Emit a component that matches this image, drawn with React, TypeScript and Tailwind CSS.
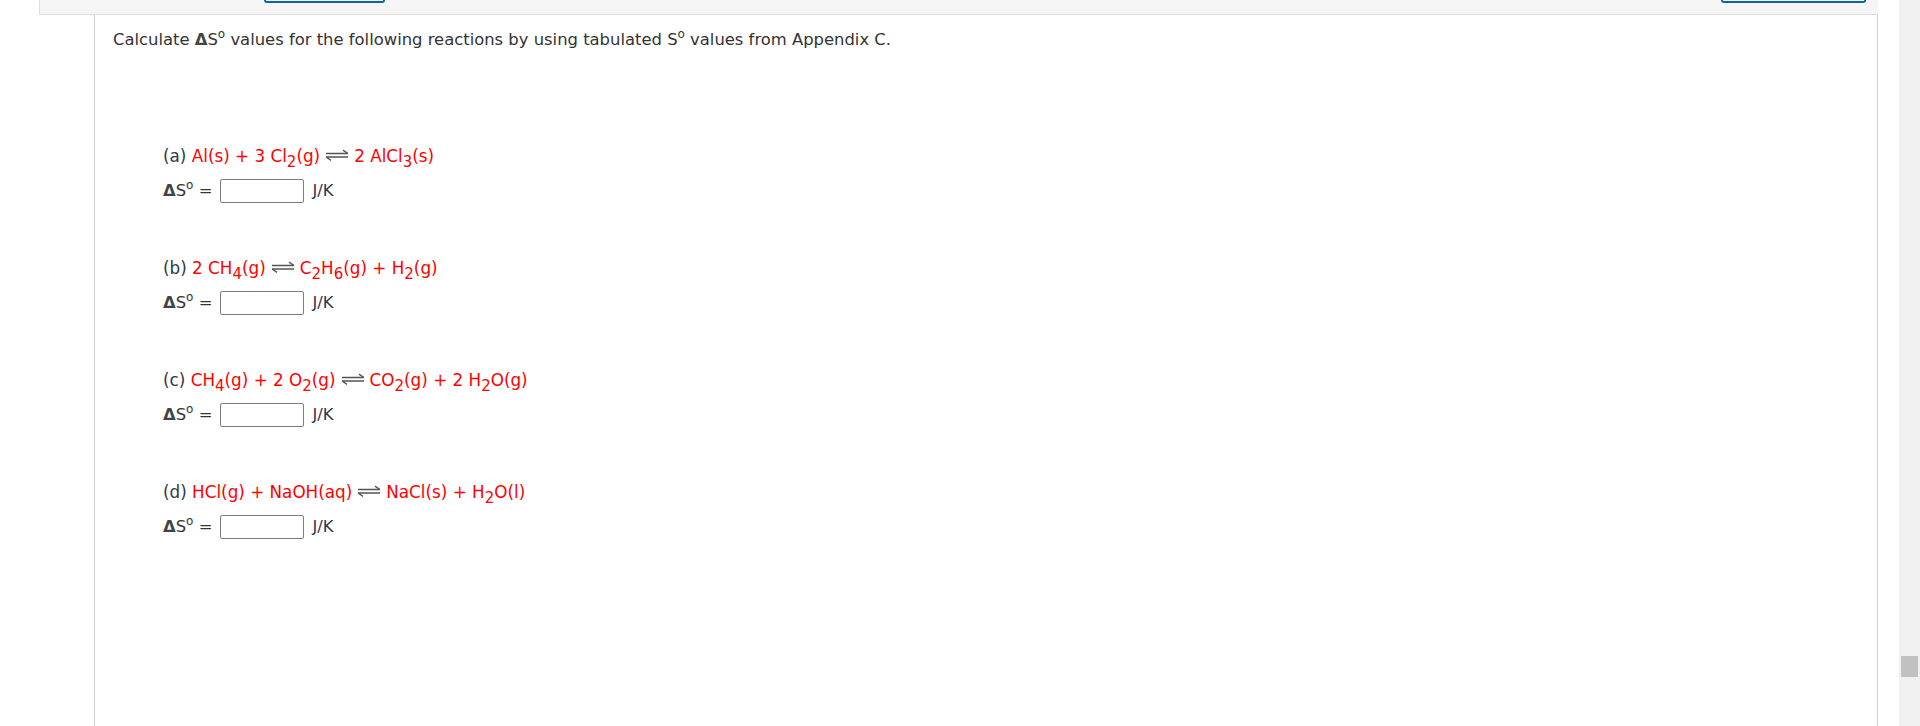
import React from 'react';

const Sub: React.FC<{ children: React.ReactNode }> = ({ children }) => (
  <sub className="text-[15px] -bottom-[0.3em]">{children}</sub>
);

const Deg: React.FC = () => (
  <sup className="text-[12px] -top-[0.6em]">o</sup>
);

const Arrow: React.FC = () => (
  <svg
    width="24"
    height="12"
    viewBox="0 0 24 12"
    className="mx-[5px] inline-block -translate-y-[2px]"
  >
    <path
      d="M1 4.5H23M23 4.5L18 1.2M1 8H23M1 8L6 11.3"
      stroke="#555"
      strokeWidth="1.4"
      fill="none"
    />
  </svg>
);

interface Reaction {
  label: string;
  left: React.ReactNode;
  right: React.ReactNode;
}

const reactions: Reaction[] = [
  {
    label: '(a)',
    left: (
      <>
        Al(s) + 3 Cl<Sub>2</Sub>(g)
      </>
    ),
    right: (
      <>
        2 AlCl<Sub>3</Sub>(s)
      </>
    ),
  },
  {
    label: '(b)',
    left: (
      <>
        2 CH<Sub>4</Sub>(g)
      </>
    ),
    right: (
      <>
        C<Sub>2</Sub>H<Sub>6</Sub>(g) + H<Sub>2</Sub>(g)
      </>
    ),
  },
  {
    label: '(c)',
    left: (
      <>
        CH<Sub>4</Sub>(g) + 2 O<Sub>2</Sub>(g)
      </>
    ),
    right: (
      <>
        CO<Sub>2</Sub>(g) + 2 H<Sub>2</Sub>O(g)
      </>
    ),
  },
  {
    label: '(d)',
    left: <>HCl(g) + NaOH(aq)</>,
    right: (
      <>
        NaCl(s) + H<Sub>2</Sub>O(l)
      </>
    ),
  },
];

const ReactionRow: React.FC<{ reaction: Reaction }> = ({ reaction }) => (
  <div className="mb-[51px]">
    <div className="h-[24px] text-[16.8px] leading-[24px] whitespace-nowrap">
      <span className="text-[#2f3a48]">{reaction.label} </span>
      <span className="text-[#ff0000]">{reaction.left}</span>
      <Arrow />
      <span className="text-[#ff0000]">{reaction.right}</span>
    </div>
    <div className="mt-[9px] flex h-[28px] items-center">
      <span className="text-[#333]">
        <span className="font-bold text-[#444]">Δ</span>S
        <Deg /> =
      </span>
      <input
        type="text"
        className="ml-[8px] h-[24px] w-[84px] rounded-[2px] border border-[#7d7d7d] bg-white px-1 outline-none"
      />
      <span className="ml-[8px] text-[#2f3a48]">J/K</span>
    </div>
  </div>
);

const App: React.FC = () => {
  return (
    <div className="flex h-[726px] w-[1920px] overflow-hidden bg-white font-['DejaVu_Sans',Verdana,sans-serif] text-[16.4px] text-[#333]">
      <div className="flex flex-1 flex-col">
        {/* top toolbar strip */}
        <div className="ml-[39px] mr-[21px] flex h-[15px] justify-between border-b border-l border-[#dedede] bg-[#f5f5f5] pl-[224px] pr-[12px]">
          <div className="h-[3px] w-[121px] rounded-b-[4px] border-x-2 border-b-2 border-[#0e64a0]" />
          <div className="h-[3px] w-[145px] rounded-b-[4px] border-x-2 border-b-2 border-[#0e64a0]" />
        </div>

        {/* question panel */}
        <div className="ml-[94px] mr-[21px] flex-1 border-x border-[#cfcfcf] bg-white pl-[18px]">
          <p className="mt-[13px] leading-[24px] text-[#333]">
            Calculate <span className="font-bold text-[#444]">Δ</span>S<Deg /> values for
            the following reactions by using tabulated S<Deg /> values from
            Appendix C.
          </p>

          <div className="mt-[92px] pl-[50px]">
            {reactions.map((r) => (
              <ReactionRow key={r.label} reaction={r} />
            ))}
          </div>
        </div>
      </div>

      {/* scrollbar */}
      <div className="w-[21px] bg-[#f0f0f0] pt-[656px]">
        <div className="mx-[2px] h-[21px] bg-[#c1c1c1]" />
      </div>
    </div>
  );
};

export default App;
